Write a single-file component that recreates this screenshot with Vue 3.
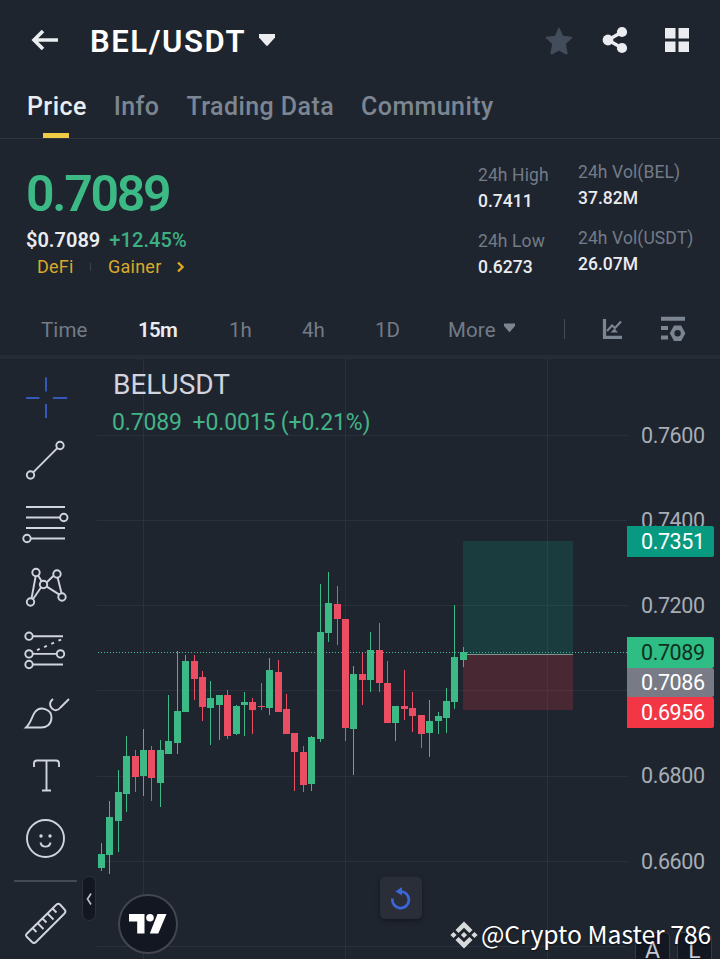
<script setup>
import { ref } from 'vue'

const tabs = ['Price', 'Info', 'Trading Data', 'Community']
const activeTab = ref('Price')

const intervals = ['Time', '15m', '1h', '4h', '1D']
const activeInterval = ref('15m')

const stats = [
  [
    { label: '24h High', value: '0.7411' },
    { label: '24h Low', value: '0.6273' }
  ],
  [
    { label: '24h Vol(BEL)', value: '37.82M' },
    { label: '24h Vol(USDT)', value: '26.07M' }
  ]
]

const gridX = [143, 345, 547]
const gridY = [435, 520, 605, 690, 776, 861, 946]

const axisLabels = [
  { text: '0.7600', y: 443 },
  { text: '0.7400', y: 528 },
  { text: '0.7200', y: 613 },
  { text: '0.6800', y: 783 },
  { text: '0.6600', y: 869 }
]

const priceTags = [
  { text: '0.7351', y: 526, height: 31, name: 'target' },
  { text: '0.7089', y: 637, height: 31, name: 'last' },
  { text: '0.7086', y: 668, height: 29, name: 'entry' },
  { text: '0.6956', y: 697, height: 31, name: 'stop' }
]

// x, high, body top, body bottom, low, rising
const candles = [
  [101, 843, 854, 868, 871, 1],
  [109, 801, 817, 855, 874, 1],
  [118, 770, 792, 821, 852, 1],
  [126, 736, 756, 794, 812, 1],
  [135, 750, 756, 777, 792, 0],
  [143, 729, 750, 776, 796, 1],
  [151, 746, 750, 778, 801, 0],
  [160, 740, 750, 783, 807, 1],
  [168, 695, 741, 754, 754, 1],
  [177, 651, 711, 743, 754, 1],
  [185, 655, 661, 712, 712, 1],
  [194, 655, 661, 679, 700, 0],
  [202, 671, 677, 707, 721, 0],
  [210, 681, 698, 708, 745, 1],
  [219, 695, 695, 705, 740, 1],
  [227, 690, 695, 736, 739, 0],
  [236, 705, 706, 734, 735, 1],
  [244, 692, 702, 705, 736, 1],
  [252, 698, 702, 710, 734, 0],
  [261, 683, 706, 707, 710, 0],
  [269, 658, 670, 708, 715, 1],
  [278, 660, 672, 712, 712, 0],
  [286, 694, 709, 734, 734, 0],
  [294, 733, 733, 752, 791, 0],
  [303, 746, 752, 785, 792, 0],
  [311, 736, 737, 784, 791, 1],
  [320, 584, 632, 739, 742, 1],
  [328, 572, 603, 633, 642, 1],
  [337, 586, 604, 619, 645, 0],
  [345, 619, 619, 728, 741, 0],
  [353, 666, 674, 729, 775, 1],
  [362, 653, 674, 680, 705, 0],
  [370, 632, 650, 680, 692, 1],
  [379, 623, 650, 683, 692, 0],
  [387, 661, 683, 723, 723, 0],
  [395, 706, 706, 723, 741, 1],
  [404, 670, 706, 709, 720, 0],
  [412, 692, 708, 716, 732, 0],
  [421, 715, 715, 734, 748, 0],
  [429, 700, 721, 733, 757, 1],
  [438, 712, 716, 721, 734, 1],
  [446, 688, 701, 718, 733, 1],
  [454, 605, 657, 702, 709, 1],
  [463, 647, 652, 660, 667, 1]
]
</script>

<template>
  <div class="page">
    <header class="header">
      <svg class="back" width="28" height="22" viewBox="0 0 28 22">
        <path d="M12 2 L3 11 L12 20 M3.5 11 H27" fill="none" stroke="#eaecef" stroke-width="3.6" />
      </svg>
      <h1 class="pair">BEL/USDT</h1>
      <svg class="caret" width="18" height="14" viewBox="0 0 18 14">
        <path d="M1 1 H17 V4.5 L9.8 12.6 Q9 13.3 8.2 12.6 L1 4.5 Z" fill="#eaecef" />
      </svg>
      <div class="header-actions">
        <svg width="28" height="28" viewBox="0 0 28 28">
          <path
            d="M14 1.5 L17.6 9.6 L26.5 10.6 L20 16.6 L21.9 26.4 H20.5 L14 22.8 L7.5 26.4 H6.1 L8 16.6 L1.5 10.6 L10.4 9.6 Z"
            fill="#434c5a" stroke="#434c5a" stroke-width="1.5" stroke-linejoin="round"
          />
        </svg>
        <svg width="28" height="28" viewBox="0 0 28 28">
          <path d="M21 6 L7 14 L21 22" fill="none" stroke="#eaecef" stroke-width="3.4" />
          <circle cx="21" cy="6" r="5.1" fill="#eaecef" />
          <circle cx="7" cy="14" r="5.4" fill="#eaecef" />
          <circle cx="21" cy="22" r="5.1" fill="#eaecef" />
        </svg>
        <svg width="26" height="26" viewBox="0 0 26 26">
          <path d="M1 1h10.5v10.5H1z M14.5 1H25v10.5H14.5z M1 14.5h10.5V25H1z M14.5 14.5H25V25H14.5z" fill="#eaecef" />
        </svg>
      </div>
    </header>

    <nav class="tabs">
      <button
        v-for="tab in tabs"
        :key="tab"
        class="tab"
        :class="{ active: tab === activeTab }"
        @click="activeTab = tab"
      >
        {{ tab }}
      </button>
    </nav>

    <section class="summary">
      <div class="quote">
        <div class="price">0.7089</div>
        <div class="fiat-row">
          <span class="fiat">$0.7089</span>
          <span class="change">+12.45%</span>
        </div>
        <div class="tags">
          <span class="tag-defi">DeFi</span>
          <i class="tag-divider"></i>
          <span class="tag-gainer">Gainer</span>
          <svg width="9" height="12" viewBox="0 0 9 12">
            <path d="M2 1.5 L6.6 6 L2 10.5" fill="none" stroke="#e0ab22" stroke-width="2.3" />
          </svg>
        </div>
      </div>
      <div v-for="(column, i) in stats" :key="i" class="stat-column">
        <div v-for="item in column" :key="item.label" class="stat">
          <span class="stat-label">{{ item.label }}</span>
          <span class="stat-value">{{ item.value }}</span>
        </div>
      </div>
    </section>

    <div class="intervals">
      <button
        v-for="item in intervals"
        :key="item"
        class="interval"
        :class="{ active: item === activeInterval }"
        @click="activeInterval = item"
      >
        {{ item }}
      </button>
      <button class="interval more">
        More
        <svg width="13" height="10" viewBox="0 0 13 10">
          <path d="M1 .5 H12 V3 L7 8.8 Q6.5 9.3 6 8.8 L1 3 Z" fill="#7c8592" />
        </svg>
      </button>
      <i class="interval-divider"></i>
      <svg width="22" height="22" viewBox="0 0 22 22">
        <path d="M2.5 1 V19.3 H20" fill="none" stroke="#7c8592" stroke-width="3.2" />
        <path d="M5 13 L10 7.5 L13 10 L19 3.5" fill="none" stroke="#7c8592" stroke-width="2.2" />
        <path d="M8.5 14.5 L12.3 10.5 L16 14.5 Z" fill="#7c8592" />
      </svg>
      <svg width="26" height="28" viewBox="0 0 26 28">
        <path d="M1 3.7 H25 M1 13 H8 M1 22.6 H8" stroke="#7c8592" stroke-width="4" />
        <path d="M14 10.5 H21.2 L25.4 18.3 L21.2 26 H14 L9.8 18.3 Z" fill="#7c8592" />
        <circle cx="17.6" cy="18.2" r="3.2" fill="#1f252f" />
      </svg>
    </div>

    <main class="workspace">
      <aside class="tools">
        <!-- crosshair -->
        <svg class="tool" viewBox="0 0 50 50">
          <path d="M25 4.5 V18.5 M25 31 V45 M5 25 H18.5 M32 25 H46" stroke="#3558bd" stroke-width="2" />
        </svg>
        <!-- trend line -->
        <svg class="tool" viewBox="0 0 50 50">
          <circle cx="39" cy="9.5" r="3.7" />
          <circle cx="9.5" cy="39" r="3.7" />
          <path d="M12.2 36.3 L36.3 12.2" />
        </svg>
        <!-- fib retracement -->
        <svg class="tool" viewBox="0 0 50 50">
          <path d="M5 8 H44 M5 18.5 H39 M5 29 H44 M10 39.5 H44" />
          <circle cx="42.8" cy="18.5" r="3.7" />
          <circle cx="6" cy="39.5" r="3.7" />
        </svg>
        <!-- xabcd pattern -->
        <svg class="tool" viewBox="0 0 50 50">
          <path d="M14.7 14 L10.5 36.5 M16.8 13 L20.8 19.4 M25.8 20.2 L32.8 13.5 M36.5 15 L40.5 31 M25.8 24.6 L38 32.4 M20.3 25 L12.1 37" />
          <circle cx="15" cy="10.5" r="3.7" />
          <circle cx="22.5" cy="22.5" r="3.7" />
          <circle cx="36" cy="12" r="3.7" />
          <circle cx="41" cy="35" r="3.7" />
          <circle cx="9.5" cy="40" r="3.7" />
        </svg>
        <!-- position projection -->
        <svg class="tool" viewBox="0 0 50 50">
          <path d="M12 11.2 H42 M12 28.9 H35.5 M12 39.5 H42" />
          <path d="M16 25.2 L42 13.7" stroke-dasharray="3 4.8" />
          <circle cx="8" cy="11.2" r="3.7" />
          <circle cx="8" cy="28.9" r="3.7" />
          <circle cx="39.5" cy="28.9" r="3.7" />
          <circle cx="8" cy="39.5" r="3.7" />
        </svg>
        <!-- brush -->
        <svg class="tool" viewBox="0 0 50 50">
          <path d="M5 39.5 C10 35 10.5 29 14 24 C19 17.5 30.5 21 30.5 29.5 C30.5 36 26 39.5 20 39.5 Z" />
          <path d="M32 11 C27.5 14.5 28.5 19 32.5 21.5 C35.5 23.2 37.5 22 39.5 19.5 L48 11" />
        </svg>
        <!-- text -->
        <svg class="tool" viewBox="0 0 50 50">
          <path d="M13 16 V12.5 Q13 9.5 16 9.5 H35 Q38 9.5 38 12.5 V16 M25.5 9.5 V39.5 M21 39.5 H30" />
        </svg>
        <!-- emoji -->
        <svg class="tool" viewBox="0 0 50 50">
          <circle cx="24.5" cy="24.5" r="18.5" />
          <circle class="dot" cx="20" cy="22" r="1.7" />
          <circle class="dot" cx="29" cy="22" r="1.7" />
          <path d="M19.5 28.5 C20.5 34 28.5 34 29.5 28.5" />
        </svg>
        <hr class="tools-divider" />
        <!-- ruler -->
        <svg class="tool" viewBox="0 0 50 50">
          <path d="M5.5 35 L35.5 5.5 Q37.5 4 39.5 6 L43.5 10.5 Q45.5 12.5 43.5 14.5 L15 43 Q13 45 11 43 L5.5 37.5 Q4.3 36.3 5.5 35 Z M12 29.5 L15.5 33 M17 24.5 L22.5 30 M22 20 L25.5 23.5 M27 15 L32.5 20.5 M32 10 L35.5 13.5" />
        </svg>
        <button class="collapse">
          <svg width="8" height="14" viewBox="0 0 8 14">
            <path d="M6 1.5 L2.5 7 L6 12.5" fill="none" stroke="#b9bec7" stroke-width="1.7" />
          </svg>
        </button>
      </aside>

      <section class="chart">
        <svg class="plot" width="623" height="600" viewBox="97 359 623 600">
          <g class="grid" shape-rendering="crispEdges">
            <rect v-for="x in gridX" :key="'x' + x" :x="x" y="359" width="1" height="600" />
            <rect v-for="y in gridY" :key="'y' + y" x="97" :y="y" width="530" height="1" />
          </g>

          <path d="M98 652.5 H627" stroke="#4dbd96" stroke-width="1" stroke-dasharray="1 2" />

          <rect class="zone-profit" x="463" y="541" width="110" height="113" />
          <rect class="zone-loss" x="463" y="655" width="110" height="55" />
          <rect x="463" y="654" width="110" height="1" fill="#7f918f" />

          <g
            v-for="[x, high, top, bottom, low, up] in candles"
            :key="x"
            :class="up ? 'candle-up' : 'candle-down'"
          >
            <rect :x="x" :y="high" width="1" :height="low - high" />
            <rect :x="x - 3" :y="top" width="7" :height="bottom - top" />
          </g>

          <text class="symbol" x="113" y="394" textLength="117">BELUSDT</text>
          <text class="quote-text" x="112" y="430" textLength="70">0.7089</text>
          <text class="quote-text" x="192.5" y="430" textLength="178">+0.0015 (+0.21%)</text>

          <text
            v-for="label in axisLabels"
            :key="label.text"
            class="axis-text"
            x="641"
            :y="label.y"
            textLength="64"
          >{{ label.text }}</text>

          <g v-for="tag in priceTags" :key="tag.text" :class="'price-tag ' + tag.name">
            <path :d="`M627 ${tag.y} h85 q2 0 2 2 v${tag.height - 4} q0 2 -2 2 h-85 z`" />
            <text x="641" :y="tag.y + tag.height / 2 + 7.5" textLength="64">{{ tag.text }}</text>
          </g>
        </svg>

        <div class="tv-logo">
          <svg width="38" height="20" viewBox="0 0 38 20">
            <path d="M0 0 H15.5 V19.5 H8.2 V7.5 H0 Z M28.5 0 H37.5 L29.3 19.5 H20.8 Z" fill="#fff" />
            <circle cx="21" cy="3.8" r="3.8" fill="#fff" />
          </svg>
        </div>

        <button class="reset">
          <svg width="22" height="24" viewBox="0 0 22 24">
            <path d="M2.4 12.5 A8.3 8.3 0 1 0 10.7 5.5" fill="none" stroke="#3b66dc" stroke-width="2.7" />
            <path d="M5.5 5.5 L12 1 V9.5 Z" fill="#3b66dc" />
          </svg>
        </button>

        <div class="scale-modes">
          <span>A</span>
          <span>L</span>
        </div>

        <div class="watermark">
          <svg width="28" height="28" viewBox="0 0 28 28" fill="#d9dadc">
            <path d="M14 .5 L22.5 9 L19.4 12.1 L14 6.7 L8.6 12.1 L5.5 9 Z" />
            <path d="M14 27.5 L22.5 19 L19.4 15.9 L14 21.3 L8.6 15.9 L5.5 19 Z" />
            <path d="M3.5 10.9 L6.6 14 L3.5 17.1 L.4 14 Z M24.5 10.9 L27.6 14 L24.5 17.1 L21.4 14 Z M14 10.9 L17.1 14 L14 17.1 L10.9 14 Z" />
          </svg>
          <span>@Crypto Master 786</span>
        </div>
      </section>
    </main>
  </div>
</template>

<style>
body {
  background: #1f252f;
}
</style>

<style scoped>
.page {
  width: 720px;
  height: 959px;
  overflow: hidden;
  display: flex;
  flex-direction: column;
  background: #1f252f;
  color: #eaecef;
  font-family: Roboto, 'Liberation Sans', sans-serif;
}

button {
  padding: 0;
  border: none;
  background: none;
  color: inherit;
  font-family: inherit;
  white-space: nowrap;
}

.header {
  flex: none;
  height: 80px;
  display: flex;
  align-items: center;
  box-sizing: border-box;
  padding: 1px 30px 2px 31px;
}

.pair {
  margin: 3px 0 0 31px;
  width: 156px;
  font-size: 31px;
  font-weight: 600;
  letter-spacing: 1.6px;
  color: #fff;
  white-space: nowrap;
}

.caret {
  margin-left: 12px;
}

.header-actions {
  margin-left: auto;
  display: flex;
  align-items: center;
  gap: 28px;
}

.header-actions svg:first-child {
  margin-top: 2px;
}

.header-actions svg:last-child {
  margin-left: 7px;
}

.tabs {
  flex: none;
  height: 58px;
  display: flex;
  gap: 27px;
  padding-left: 27px;
  border-bottom: 1px solid #2d343e;
}

.tab {
  display: flex;
  flex-direction: column;
  align-items: center;
  justify-content: space-between;
  padding-top: 12px;
  font-size: 25px;
  font-weight: 500;
  line-height: 30px;
  letter-spacing: 0.42px;
  color: #7c8592;
}

.tab.active {
  color: #eaecef;
}

.tab.active::after {
  content: '';
  width: 26px;
  height: 5px;
  margin-right: 2px;
  background: #f0cb45;
}

.summary {
  flex: none;
  height: 164px;
  display: flex;
}

.quote {
  width: 452px;
  padding-left: 26px;
}

.price {
  margin-top: 29px;
  font-size: 50px;
  font-weight: 600;
  line-height: 52px;
  letter-spacing: -2.3px;
  color: #3cba86;
}

.fiat-row {
  display: flex;
  gap: 9px;
  margin-top: 6px;
  font-size: 20px;
  line-height: 28px;
}

.fiat {
  font-weight: 600;
}

.change {
  font-weight: 500;
  letter-spacing: 0.1px;
  color: #3cb083;
}

.tags {
  display: flex;
  align-items: center;
  margin-top: 1px;
  padding-left: 11px;
  font-size: 18px;
  line-height: 24px;
  letter-spacing: 0.25px;
  color: #d9a92b;
}

.tag-defi {
  width: 53px;
}

.tag-divider {
  width: 1px;
  height: 8px;
  background: #3b424d;
}

.tag-gainer {
  width: 55px;
  margin: 0 13px 0 17px;
}

.stat-column {
  display: flex;
  flex-direction: column;
  gap: 14px;
  width: 100px;
  padding-top: 23px;
  white-space: nowrap;
}

.stat-column:last-child {
  padding-top: 20px;
}

.stat {
  display: flex;
  flex-direction: column;
  font-size: 17.5px;
  line-height: 26px;
}

.stat-label {
  letter-spacing: 0.1px;
  color: #737b87;
}

.stat-value {
  font-weight: 500;
}

.intervals {
  flex: none;
  height: 51px;
  display: grid;
  grid-template-columns: 97px 91px 73px 73px 73px 116px 37px 58px 26px;
  align-items: center;
  padding: 1px 0 0 41px;
  border-bottom: 4px solid #262c36;
}

.interval {
  text-align: left;
  font-size: 20.5px;
  letter-spacing: 0.1px;
  color: #737b87;
}

.interval.active {
  font-weight: 600;
  letter-spacing: -0.7px;
  color: #eaecef;
}

.more {
  display: flex;
  align-items: center;
  gap: 7px;
}

.more svg {
  margin-top: -3px;
}

.interval-divider {
  width: 1px;
  height: 20px;
  margin-top: -2px;
  background: #434a55;
}

.intervals > svg {
  margin: -2px 0 0 1px;
}

.workspace {
  flex: 1;
  display: flex;
}

.tools {
  position: relative;
  width: 97px;
  display: flex;
  flex-direction: column;
  padding-top: 14px;
}

.tool {
  flex: none;
  width: 50px;
  height: 50px;
  margin: 0 0 13px 21px;
  fill: none;
  stroke: #d1d4dc;
  stroke-width: 1.9;
}

.tool .dot {
  fill: #d1d4dc;
  stroke: none;
}

.tools-divider {
  width: 63px;
  height: 2px;
  margin: 3px 0 17px 14px;
  border: none;
  background: #434955;
}

.collapse {
  position: absolute;
  left: 82px;
  top: 517px;
  width: 14px;
  height: 45px;
  display: flex;
  align-items: center;
  justify-content: center;
  border: 1px solid #2b303b;
  border-radius: 7px;
  box-sizing: border-box;
  background: #131722;
}

.chart {
  position: relative;
  width: 623px;
}

.plot {
  display: block;
}

.grid {
  fill: #2a313a;
}

.zone-profit {
  fill: #089981;
  fill-opacity: 0.2;
}

.zone-loss {
  fill: #f23645;
  fill-opacity: 0.2;
}

.candle-up {
  fill: #3cba86;
}

.candle-down {
  fill: #eb4d63;
}

.symbol {
  font-size: 28px;
  fill: #d1d4dc;
}

.quote-text {
  font-size: 23px;
  fill: #43b389;
}

.axis-text {
  font-size: 21.5px;
  fill: #a7acb5;
}

.price-tag text {
  font-size: 21.5px;
  fill: #fff;
}

.price-tag.target path {
  fill: #089981;
}

.price-tag.last path {
  fill: #2ebd85;
}

.price-tag.last text {
  fill: #10301f;
}

.price-tag.entry path {
  fill: #787b86;
}

.price-tag.stop path {
  fill: #f23645;
}

.tv-logo {
  position: absolute;
  left: 21px;
  top: 535px;
  width: 60px;
  height: 60px;
  display: flex;
  align-items: center;
  justify-content: center;
  border: 2px solid #434651;
  border-radius: 50%;
  box-sizing: border-box;
  background: #131722;
}

.reset {
  position: absolute;
  left: 283px;
  top: 518px;
  width: 42px;
  height: 42px;
  display: flex;
  align-items: center;
  justify-content: center;
  border-radius: 5px;
  background: #2a2e39;
  box-shadow: 0 2px 5px rgba(0, 0, 0, 0.4);
}

.scale-modes {
  position: absolute;
  left: 538px;
  top: 573px;
  display: flex;
  gap: 7px;
}

.scale-modes span {
  width: 35px;
  height: 40px;
  border: 1px solid #363a45;
  border-radius: 5px;
  box-sizing: border-box;
  background: #131722;
  font-size: 23px;
  line-height: 36px;
  text-align: center;
  color: #c5c9d1;
}

.watermark {
  position: absolute;
  left: 353px;
  top: 559px;
  display: flex;
  align-items: center;
  gap: 3px;
  font-family: 'Noto Sans CJK SC', sans-serif;
  font-size: 24.7px;
  line-height: 36px;
  color: #fff;
  white-space: nowrap;
  text-shadow: 0 1px 2px rgba(0, 0, 0, 0.6);
}

.watermark span {
  margin-top: -3px;
}
</style>
